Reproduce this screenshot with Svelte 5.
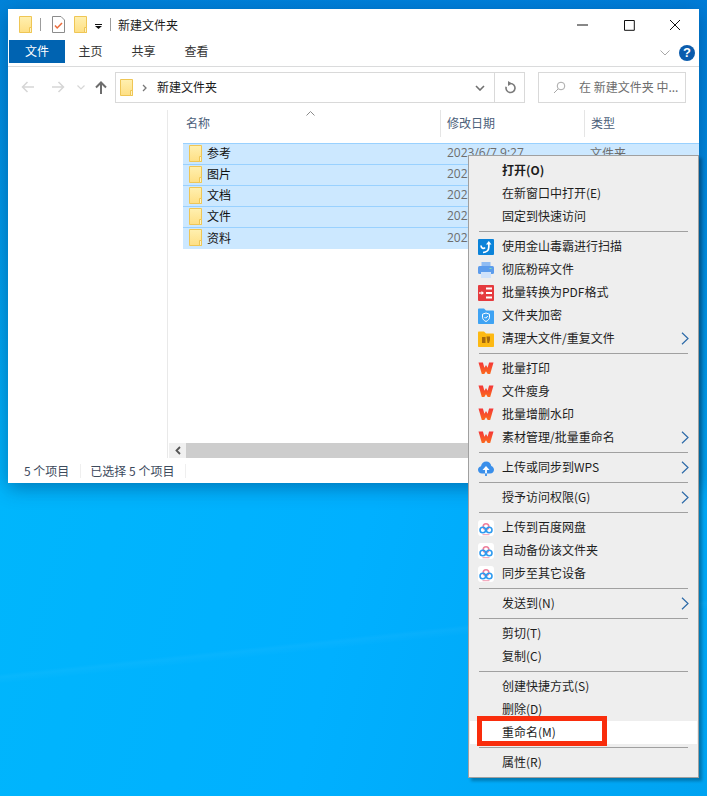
<script>
  const rows = ['参考', '图片', '文档', '文件', '资料'];
  const menu = [
    [{ t: '打开(O)', bold: true }, { t: '在新窗口中打开(E)' }, { t: '固定到快速访问' }],
    [
      { t: '使用金山毒霸进行扫描', i: 'duba' },
      { t: '彻底粉碎文件', i: 'shred' },
      { t: '批量转换为PDF格式', i: 'pdf' },
      { t: '文件夹加密', i: 'lock' },
      { t: '清理大文件/重复文件', i: 'clean', sub: true }
    ],
    [
      { t: '批量打印', i: 'wps' },
      { t: '文件瘦身', i: 'wps' },
      { t: '批量增删水印', i: 'wps' },
      { t: '素材管理/批量重命名', i: 'wps', sub: true }
    ],
    [{ t: '上传或同步到WPS', i: 'cloud', sub: true }],
    [{ t: '授予访问权限(G)', sub: true }],
    [
      { t: '上传到百度网盘', i: 'baidu' },
      { t: '自动备份该文件夹', i: 'baidu' },
      { t: '同步至其它设备', i: 'baidu' }
    ],
    [{ t: '发送到(N)', sub: true }],
    [{ t: '剪切(T)' }, { t: '复制(C)' }],
    [{ t: '创建快捷方式(S)' }, { t: '删除(D)' }, { t: '重命名(M)', hot: true }],
    [{ t: '属性(R)' }]
  ];
</script>

{#snippet folder()}
  <svg class="folder" viewBox="0 0 13 17">
    <path d="M.5.5h12v16H.5z" fill="url(#foldfill)" stroke="#efc655" />
    <path d="M10.5 11.5h2v5h-2z" fill="#fff3c4" stroke="#efc655" />
  </svg>
{/snippet}

{#snippet icon(name)}
  <svg class="micon" viewBox="0 0 16 16">
    {#if name === 'duba'}
      <rect width="16" height="16" rx="1" fill="#0b83d9" />
      <path d="M3 6.500c.2 2.800 2.600 3.800 4 2M5 13.500c3.500 0 5.800-2.300 5.800-5.500V4" fill="none" stroke="#fff" stroke-width="1.700" />
      <path d="M8 5.500l2.800-3.500L13.500 5.500z" fill="#fff" />
    {:else if name === 'shred'}
      <rect x="3.500" y="0" width="9" height="5" fill="#8fbcf3" />
      <rect x="0" y="4" width="16" height="8" rx="1.500" fill="#5c9cec" />
      <rect x="3" y="10" width="10" height="6" fill="#cfe2fb" />
      <rect x="11.500" y="6" width="2" height="1" fill="#7fe0b0" />
    {:else if name === 'pdf'}
      <rect width="16" height="16" rx="1" fill="#e53a3e" />
      <path d="M8 3.500h6M8 8h6M8 12.500h6" stroke="#fff" stroke-width="2" />
      <path d="M1 8h3" stroke="#fff" stroke-width="1.300" />
      <path d="M3.500 6L6 8l-2.500 2z" fill="#fff" />
    {:else if name === 'lock'}
      <path d="M0 1.500C0 1 .4.500 1 .500h5l2 2h7c.6 0 1 .4 1 1V15c0 .6-.4 1-1 1H1c-.6 0-1-.4-1-1z" fill="#3fa3f3" />
      <path d="M8 5l3.500 1.200v3c0 2.200-1.700 3.400-3.500 4.300-1.800-.9-3.500-2.100-3.500-4.300v-3z" fill="none" stroke="#fff" stroke-width="1" />
      <path d="M6.500 9l1.200 1.200L9.800 8" fill="none" stroke="#fff" stroke-width="1" />
    {:else if name === 'clean'}
      <path d="M0 1.500C0 1 .4.500 1 .500h5l2 2h7c.6 0 1 .4 1 1V15c0 .6-.4 1-1 1H1c-.6 0-1-.4-1-1z" fill="#fdb913" />
      <path d="M4 6h3.500v6H4zM8.500 5.500h3.500V9l-1 3H9.500z" fill="#a5690d" />
    {:else if name === 'wps'}
      <path d="M.5 1.500h4.400l1.500 5.200L8 4l1.600 2.700 1.500-5.200h4.400L12.200 13H9.700L8 10.200 6.300 13H3.800z" fill="url(#wpsfill)" />
    {:else if name === 'cloud'}
      <path d="M4 13.500c-2.200 0-4-1.600-4-3.700 0-1.900 1.300-3.300 3-3.600C3.500 3.600 5.600 1.500 8.300 1.500c2.600 0 4.700 1.900 5 4.500 1.500.5 2.700 2 2.700 3.800 0 2.100-1.700 3.700-3.800 3.700z" fill="#3a8fea" />
      <path d="M8 13.500V8.500" stroke="#fff" stroke-width="1.800" />
      <path d="M4.500 10L8 6l3.500 4z" fill="#fff" />
      <path d="M8 13.500V16" stroke="#3a8fea" stroke-width="1.800" />
    {:else if name === 'baidu'}
      <rect width="16" height="16" rx="3" fill="#fff" />
      <circle cx="8" cy="6.500" r="2.800" fill="none" stroke="#ef7f9c" stroke-width="1.600" />
      <circle cx="4.800" cy="10" r="2.800" fill="none" stroke="#2f9bf0" stroke-width="1.600" />
      <circle cx="11.200" cy="10" r="2.800" fill="none" stroke="#2f9bf0" stroke-width="1.600" />
      <path d="M4.500 14.700h7" stroke="#f09ab0" stroke-width="1" />
    {/if}
  </svg>
{/snippet}

<div class="desktop">
  <svg class="defs" aria-hidden="true">
    <defs>
      <linearGradient id="foldfill" x1="0" y1="0" x2="0" y2="1">
        <stop offset="0" stop-color="#fff0b0" />
        <stop offset="1" stop-color="#fedf84" />
      </linearGradient>
      <linearGradient id="wpsfill" gradientUnits="userSpaceOnUse" x1="0" y1="1" x2="0" y2="13">
        <stop offset="0" stop-color="#f4343a" />
        <stop offset="1" stop-color="#fb6a1c" />
      </linearGradient>
    </defs>
  </svg>

  <section class="window">
    <header class="titlebar">
      <span class="t-ico">{@render folder()}</span>
      <i class="t-sep sep-a"></i>
      <svg class="doc" viewBox="0 0 13 17">
        <path d="M.5.500h8.500l3.500 3.500v12.500H.5z" fill="#fff" stroke="#8c8c8c" />
        <path d="M3 9.500l2.200 2.500 4.800-5" fill="none" stroke="#ea6a3a" stroke-width="1.500" />
      </svg>
      <span class="t-ico f2">{@render folder()}</span>
      <svg class="qdrop" viewBox="0 0 7 5"><path d="M0 0h7v1H0zM0 2h7L3.500 5z" fill="#111" /></svg>
      <i class="t-sep sep-b"></i>
      <span class="title">新建文件夹</span>
      <div class="controls">
        <svg viewBox="0 0 46 16"><path d="M17 8h11" stroke="#111" stroke-width="1" /></svg>
        <svg viewBox="0 0 46 16"><path d="M18.500 3.500h9.800v9.800h-9.800z" fill="none" stroke="#111" stroke-width="1" /></svg>
        <svg viewBox="0 0 46 16"><path d="M18 3l10 10M28 3L18 13" stroke="#111" stroke-width="1" /></svg>
      </div>
    </header>

    <nav class="ribbon">
      <span class="tab active">文件</span>
      <span class="tab">主页</span>
      <span class="tab">共享</span>
      <span class="tab">查看</span>
      <svg class="collapse" viewBox="0 0 10 6"><path d="M.5.500L5 5 9.500.5" fill="none" stroke="#a9a9a9" /></svg>
      <span class="help">?</span>
    </nav>

    <div class="navbar">
      <svg class="nav-ico back" viewBox="0 0 14 12"><path d="M13 6H2M6.500 1L1.500 6l5 5" fill="none" stroke="#d6d6d6" stroke-width="1.500" /></svg>
      <svg class="nav-ico fwd" viewBox="0 0 14 12"><path d="M1 6h11M7.500 1l5 5-5 5" fill="none" stroke="#d6d6d6" stroke-width="1.500" /></svg>
      <svg class="drop" viewBox="0 0 8 5"><path d="M.5.500L4 4 7.500.5" fill="none" stroke="#d6d6d6" stroke-width="1.200" /></svg>
      <svg class="nav-ico up" viewBox="0 0 12 13"><path d="M6 13V2M1 6.500l5-5 5 5" fill="none" stroke="#6d6d6d" stroke-width="2" /></svg>
      <div class="address">
        <span class="a-folder">{@render folder()}</span>
        <svg class="crumb" viewBox="0 0 5 8"><path d="M1 1l3 3-3 3" fill="none" stroke="#777" stroke-width="1.300" /></svg>
        <span class="a-text">新建文件夹</span>
        <svg class="a-down" viewBox="0 0 10 6"><path d="M1 1l4 4 4-4" fill="none" stroke="#707070" stroke-width="1.600" /></svg>
        <span class="a-refresh">
          <svg viewBox="0 0 12 13"><path d="M6.500 2.500a4.500 4.500 0 1 1-4.300 3.200" fill="none" stroke="#7a7a7a" stroke-width="1.600" /><path d="M4 0l4 2.500L4 5z" fill="#7a7a7a" /></svg>
        </span>
      </div>
      <div class="search">
        <svg viewBox="0 0 13 13"><circle cx="8" cy="5" r="3.800" fill="none" stroke="#a8a8a8" /><path d="M5 8l-4 4" stroke="#a8a8a8" stroke-width="1" /></svg>
        <span class="s-text">在 新建文件夹 中...</span>
      </div>
    </div>

    <div class="content">
      <aside class="sidebar"></aside>
      <main class="pane">
        <div class="headers">
          <svg class="sort" viewBox="0 0 9 5"><path d="M.5 4.500L4.500.5l4 4" fill="none" stroke="#8a8a8a" /></svg>
          <span class="h name"><span class="lift">名称</span></span>
          <span class="h date"><span class="lift">修改日期</span></span>
          <span class="h type"><span class="lift">类型</span></span>
        </div>
        <div class="list">
          {#each rows as r, idx}
            <div class="row" class:first={idx === 0}>
              <span class="r-ico">{@render folder()}</span>
              <span class="r-name">{r}</span>
              <span class="r-date">2023/6/7 9:27</span>
              <span class="r-type">文件夹</span>
            </div>
          {/each}
        </div>
        <div class="hscroll">
          <span class="arrow"><svg viewBox="0 0 6 9"><path d="M5 1L1.500 4.500 5 8" fill="none" stroke="#555" stroke-width="1.800" /></svg></span>
          <span class="thumb"></span>
        </div>
      </main>
    </div>

    <footer class="status">
      <span class="s1">5 个项目</span>
      <span class="s2">已选择 5 个项目</span>
    </footer>
  </section>

  <div class="menu">
    {#each menu as group, g}
      {#if g > 0}<div class="sep"></div>{/if}
      {#each group as item}
        <div class="item" class:hot={item.hot}>
          <span class="m-ico">{#if item.i}{@render icon(item.i)}{/if}</span>
          <span class="m-text" class:bold={item.bold}>{item.t}</span>
          {#if item.sub}
            <svg class="chev" viewBox="0 0 8 13"><path d="M1 .8L7 6.500 1 12.200" fill="none" stroke="#2c6aa8" stroke-width="1.200" /></svg>
          {/if}
          {#if item.hot}<span class="redbox"></span>{/if}
        </div>
      {/each}
    {/each}
  </div>
</div>

<style>
  :global(body) {
    margin: 0;
  }
  .desktop {
    position: relative;
    width: 707px;
    height: 796px;
    overflow: hidden;
    font-family: "Noto Sans CJK SC", "Liberation Sans", sans-serif;
    font-size: 12px;
    color: #1a1a1a;
    background:
      linear-gradient(to bottom, rgba(0, 88, 190, 0.55) 0, rgba(0, 110, 200, 0.3) 300px, rgba(0, 120, 210, 0) 490px),
      linear-gradient(174deg, rgba(255, 255, 255, 0) 77.4%, rgba(255, 255, 255, 0.03) 77.8%, rgba(255, 255, 255, 0) 78.6%),
      linear-gradient(105deg, #00b8fb 0%, #00b0ff 55%, #00a3f1 100%);
  }
  .defs {
    position: absolute;
    width: 0;
    height: 0;
  }
  .window {
    position: absolute;
    left: 8px;
    top: 9px;
    width: 691px;
    height: 474px;
    background: #fff;
    display: flex;
    flex-direction: column;
    box-shadow: 0 5px 18px rgba(0, 40, 90, 0.42);
  }
  .folder {
    display: block;
    width: 13px;
    height: 17px;
  }
  .titlebar {
    height: 31px;
    flex: none;
    display: flex;
    align-items: center;
    padding-left: 11px;
    box-sizing: border-box;
  }
  .t-ico {
    display: block;
  }
  .t-sep {
    width: 1px;
    height: 13px;
    background: #9c9c9c;
  }
  .sep-a {
    margin: 0 11px 0 8px;
  }
  .doc {
    width: 13px;
    height: 17px;
  }
  .f2 {
    margin-left: 9px;
  }
  .qdrop {
    width: 7px;
    height: 5px;
    margin: 3px 8px 0 8px;
  }
  .sep-b {
    margin-right: 7px;
  }
  .title {
    color: #1a1a1a;
  }
  .controls {
    margin-left: auto;
    display: flex;
    margin-right: 1px;
  }
  .controls svg {
    width: 46px;
    height: 16px;
    display: block;
  }
  .ribbon {
    height: 27px;
    flex: none;
    display: flex;
    align-items: flex-start;
    padding-left: 1px;
    box-sizing: border-box;
    border-bottom: 1px solid #dadbdc;
    position: relative;
  }
  .tab {
    height: 23px;
    line-height: 22px;
    width: 53px;
    text-align: center;
    color: #333;
  }
  .tab.active {
    width: 56px;
    margin-right: -1px;
    background: #0063b1;
    color: #fff;
  }
  .collapse {
    width: 10px;
    height: 6px;
    margin-left: auto;
    margin-top: 10px;
    margin-right: 9px;
  }
  .help {
    width: 16px;
    height: 16px;
    border-radius: 50%;
    background: #0b5cad;
    color: #fff;
    font: bold 13px/16px "Liberation Sans", sans-serif;
    text-align: center;
    margin-top: 5px;
    margin-right: 4px;
  }
  .navbar {
    height: 43px;
    flex: none;
    display: flex;
    align-items: flex-start;
    padding-top: 5px;
    box-sizing: border-box;
  }
  .nav-ico {
    display: block;
    margin-top: 9px;
  }
  .back {
    width: 14px;
    height: 12px;
    margin-left: 13px;
  }
  .fwd {
    width: 14px;
    height: 12px;
    margin-left: 16px;
  }
  .drop {
    width: 8px;
    height: 5px;
    margin: 13px 0 0 12px;
  }
  .up {
    width: 12px;
    height: 13px;
    margin-left: 10px;
  }
  .address {
    margin-left: 8px;
    width: 410px;
    height: 31px;
    box-sizing: border-box;
    border: 1px solid #d9d9d9;
    display: flex;
    align-items: center;
  }
  .a-folder {
    margin-left: 4px;
  }
  .crumb {
    width: 5px;
    height: 8px;
    margin-left: 9px;
  }
  .a-text {
    margin-left: 10px;
    margin-bottom: 2px;
  }
  .a-down {
    width: 10px;
    height: 6px;
    margin-left: auto;
    margin-right: 9px;
  }
  .a-refresh {
    width: 30px;
    height: 100%;
    box-sizing: border-box;
    border-left: 1px solid #d9d9d9;
    display: flex;
    align-items: center;
    justify-content: center;
  }
  .a-refresh svg {
    width: 12px;
    height: 13px;
  }
  .search {
    margin-left: 13px;
    width: 148px;
    height: 31px;
    box-sizing: border-box;
    border: 1px solid #d9d9d9;
    display: flex;
    align-items: center;
    color: #6d6d6d;
    white-space: nowrap;
  }
  .search svg {
    width: 13px;
    height: 13px;
    margin-left: 14px;
    margin-right: 13px;
  }
  .s-text {
    margin-bottom: 2px;
  }
  .content {
    flex: 1;
    min-height: 0;
    display: flex;
  }
  .sidebar {
    width: 159px;
    flex: none;
    border-right: 1px solid #e9e9e9;
  }
  .pane {
    flex: 1;
    min-width: 0;
    display: flex;
    flex-direction: column;
  }
  .headers {
    height: 27px;
    flex: none;
    position: relative;
    display: flex;
    color: #4c607a;
  }
  .h {
    display: flex;
    align-items: center;
    height: 100%;
    box-sizing: border-box;
  }
  .lift {
    margin-bottom: 2px;
  }
  .name {
    width: 273px;
    padding-left: 18px;
    box-sizing: border-box;
    border-right: 1px solid #e5e5e5;
  }
  .date {
    width: 144px;
    padding-left: 6px;
    box-sizing: border-box;
    border-right: 1px solid #e5e5e5;
  }
  .type {
    padding-left: 6px;
  }
  .sort {
    position: absolute;
    left: 138px;
    top: 1px;
    width: 9px;
    height: 5px;
  }
  .list {
    flex: 1;
    min-height: 0;
    padding-top: 6px;
    padding-left: 15px;
  }
  .row {
    height: 21px;
    box-sizing: border-box;
    background: #cce8ff;
    border-bottom: 1px solid #99d1ff;
    display: flex;
    align-items: center;
  }
  .row.first {
    height: 22px;
    border-top: 1px solid #99d1ff;
  }
  .row:last-child {
    border-bottom: none;
    height: 21px;
  }
  .r-ico {
    margin-left: 6px;
    margin-bottom: 2px;
  }
  .r-name {
    margin-left: 5px;
    margin-bottom: 3px;
    width: 240px;
    color: #111;
  }
  .r-date {
    color: #6d6d6d;
    width: 143px;
    margin-bottom: 3px;
    font-family: "Open Sans", "Noto Sans CJK SC", sans-serif;
    white-space: nowrap;
  }
  .r-type {
    color: #6d6d6d;
    margin-bottom: 3px;
  }
  .hscroll {
    height: 15px;
    flex: none;
    display: flex;
    background: #f0f0f0;
    margin-left: 1px;
  }
  .arrow {
    width: 17px;
    display: flex;
    align-items: center;
    justify-content: center;
  }
  .arrow svg {
    width: 6px;
    height: 9px;
  }
  .thumb {
    flex: 1;
    background: #cdcdcd;
  }
  .status {
    height: 25px;
    flex: none;
    display: flex;
    align-items: center;
    color: #3c4a5c;
  }
  .s1 {
    margin-left: 16px;
    padding-right: 11px;
    border-right: 1px solid #efefef;
    line-height: 14px;
  }
  .s2 {
    margin-left: 9px;
    padding-right: 11px;
    border-right: 1px solid #efefef;
    line-height: 14px;
  }
  .menu {
    position: absolute;
    left: 468px;
    top: 155px;
    width: 231px;
    box-sizing: border-box;
    background: #eeeeee;
    border: 1px solid #a0a0a0;
    padding: 3px 1px;
    box-shadow: 3px 3px 3px rgba(0, 0, 0, 0.28);
    color: #1d1d1d;
  }
  .item {
    height: 23px;
    display: flex;
    align-items: center;
    position: relative;
  }
  .item.hot {
    background: #fff;
  }
  .m-ico {
    width: 16px;
    height: 16px;
    margin-left: 8px;
    flex: none;
  }
  .micon {
    display: block;
    width: 16px;
    height: 16px;
  }
  .m-text {
    margin-left: 8px;
    margin-bottom: 2px;
    white-space: nowrap;
  }
  .bold {
    font-weight: 700;
  }
  .chev {
    position: absolute;
    right: 8px;
    top: 5px;
    width: 8px;
    height: 13px;
  }
  .sep {
    height: 1px;
    margin: 3px 9px;
    background: #a0a0a0;
  }
  .redbox {
    position: absolute;
    left: 7px;
    top: -5px;
    width: 130px;
    height: 30px;
    box-sizing: border-box;
    border: 5px solid #f92d0c;
  }
</style>
